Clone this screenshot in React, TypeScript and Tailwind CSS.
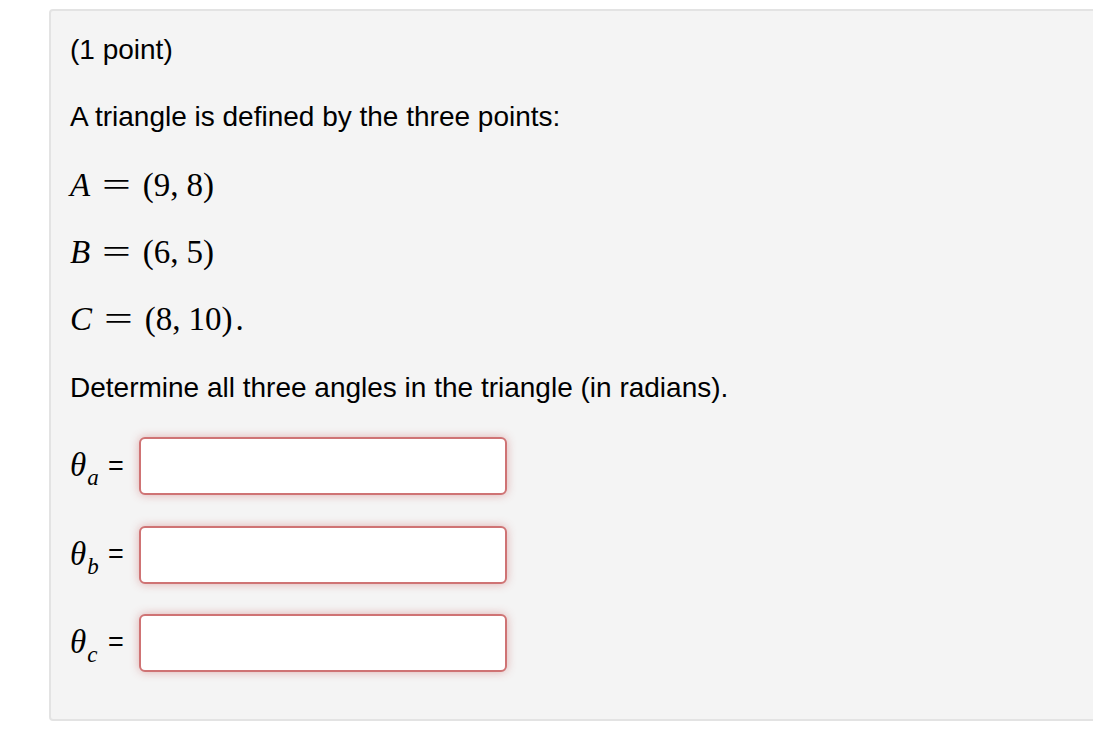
import React from "react";

const serif = { fontFamily: '"Liberation Serif", "Times New Roman", serif' };

function MathPoint({ name, x, y, dot }: { name: string; x: string; y: string; dot?: boolean }) {
  return (
    <span className="text-[33px] text-black whitespace-nowrap flex items-center" style={serif}>
      <i>{name}</i>
      <span className="inline-block scale-x-[1.55] ml-[17px] mr-[13px]">=</span>
      <span className="ml-[4px]">(</span>
      <span>{x}</span>
      <span className="mr-[8px]">,</span>
      <span>{y}</span>
      <span>)</span>
      {dot && <span className="ml-[3px]">.</span>}
    </span>
  );
}

function AngleRow({ sub, className }: { sub: string; className: string }) {
  return (
    <div className={`flex items-center ${className}`}>
      <span className="w-[38px] text-[33px] text-black whitespace-nowrap" style={serif}>
        <i>θ</i>
        <i className="text-[23px] relative top-[9px] ml-[1px]">{sub}</i>
      </span>
      <span className="text-[27px] text-black">=</span>
      <input
        type="text"
        className="ml-[15px] w-[368px] h-[58px] bg-white border-2 border-[#cf7374] rounded-md shadow-[0_0_10px_rgba(200,90,90,0.45)] outline-none"
      />
    </div>
  );
}

export default function App() {
  return (
    <div
      className="w-full min-h-[736px] bg-white overflow-hidden"
      style={{ fontFamily: '"Liberation Sans", Arial, sans-serif' }}
    >
      <div className="ml-[49px] mt-[9px] w-[1080px] border-2 border-[#e3e3e3] rounded bg-[#f4f4f4] pl-[19px] pb-[26px] text-[28px] text-black">
        <div className="h-[78px] flex items-center">(1 point)</div>
        <div className="h-[56px] flex items-center">A triangle is defined by the three points:</div>
        <div className="h-[82px] flex items-center">
          <MathPoint name="A" x="9" y="8" />
        </div>
        <div className="h-[52px] flex items-center">
          <MathPoint name="B" x="6" y="5" />
        </div>
        <div className="h-[82px] flex items-center">
          <MathPoint name="C" x="8" y="10" dot />
        </div>
        <div className="h-[54px] flex items-center">
          Determine all three angles in the triangle (in radians).
        </div>
        <AngleRow sub="a" className="h-[102px]" />
        <AngleRow sub="b" className="h-[75px]" />
        <AngleRow sub="c" className="h-[101px]" />
      </div>
    </div>
  );
}
